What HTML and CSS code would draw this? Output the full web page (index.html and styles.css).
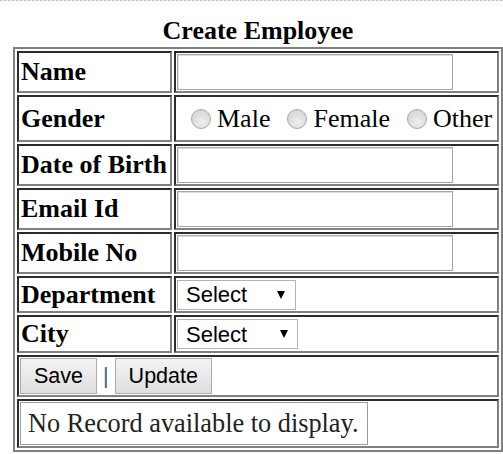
FILE: index.html
```html
<!DOCTYPE html>
<html lang="en">
<head>
<meta charset="utf-8">
<title>Create Employee</title>
<link rel="stylesheet" href="styles.css">
</head>
<body>
<div class="topline"></div>
<table class="emp">
  <caption>Create Employee</caption>
  <tr>
    <td class="label">Name</td>
    <td class="val"><input type="text" class="txt"></td>
  </tr>
  <tr>
    <td class="label">Gender</td>
    <td class="val">
      <div class="radios">
        <label class="opt"><input type="radio" name="gender" class="rad">Male</label>
        <label class="opt"><input type="radio" name="gender" class="rad">Female</label>
        <label class="opt"><input type="radio" name="gender" class="rad">Other</label>
      </div>
    </td>
  </tr>
  <tr>
    <td class="label">Date of Birth</td>
    <td class="val"><input type="text" class="txt"></td>
  </tr>
  <tr>
    <td class="label">Email Id</td>
    <td class="val"><input type="text" class="txt"></td>
  </tr>
  <tr>
    <td class="label">Mobile No</td>
    <td class="val"><input type="text" class="txt"></td>
  </tr>
  <tr>
    <td class="label">Department</td>
    <td class="val">
      <div class="selrow">
        <span class="sel sel-dept"><select><option>Select</option></select></span>
      </div>
    </td>
  </tr>
  <tr>
    <td class="label">City</td>
    <td class="val">
      <div class="selrow selrow-tall">
        <span class="sel sel-city"><select><option>Select</option></select></span>
      </div>
    </td>
  </tr>
  <tr>
    <td colspan="2" class="wide">
      <div class="actions">
        <button type="button" class="btn">Save</button>
        <span class="sep">|</span>
        <button type="button" class="btn">Update</button>
      </div>
    </td>
  </tr>
  <tr>
    <td colspan="2" class="wide">
      <div class="record">No Record available to display.</div>
    </td>
  </tr>
</table>
</body>
</html>
```

FILE: styles.css
```css
html, body {
  margin: 0;
  padding: 0;
  background: #ffffff;
}

body {
  font-family: "Liberation Serif", "Times New Roman", serif;
  color: #000;
}

.topline {
  height: 1px;
  background: repeating-linear-gradient(90deg, #c4c4c4 0, #c4c4c4 2px, #e6e6e6 2px, #e6e6e6 4px);
}

.emp {
  margin: 15px 0 0 13px;
  width: 490px;
  table-layout: fixed;
  border-collapse: separate;
  border-spacing: 2px;
  border: 2px solid #808080;
}

.emp caption {
  font-weight: bold;
  font-size: 26px;
  line-height: 30px;
  padding-bottom: 1px;
  text-align: center;
  white-space: nowrap;
}

.emp td {
  border: 2px solid;
  border-color: #2b2b2b #808080 #808080 #2b2b2b;
  padding: 1px;
  vertical-align: middle;
}

.emp td.label {
  box-sizing: border-box;
  width: 155px;
  padding-left: 2px;
  font-weight: bold;
  font-size: 26px;
  line-height: 30px;
  white-space: nowrap;
}

.txt {
  display: block;
  box-sizing: border-box;
  width: 276px;
  height: 36px;
  margin: 0;
  border: 1px solid #a6a6a6;
  box-shadow: inset 1px 1px 0 #dedede;
  background: #fff;
  padding: 0 4px;
  font-family: "Liberation Sans", Arial, sans-serif;
  font-size: 20px;
}

.radios {
  display: flex;
  align-items: center;
  height: 41px;
  white-space: nowrap;
  font-size: 26px;
  line-height: 30px;
}

.opt {
  display: flex;
  align-items: center;
  margin-left: 17px;
}

.opt:first-child {
  margin-left: 14px;
}

.rad {
  appearance: none;
  -webkit-appearance: none;
  box-sizing: border-box;
  width: 20px;
  height: 20px;
  margin: 0 6px 0 0;
  border: 1px solid #a8a8a8;
  border-radius: 50%;
  background: radial-gradient(circle at 55% 65%, #efefef 0, #dcdcdc 55%, #d0d0d0 100%);
}

.selrow {
  display: flex;
  align-items: center;
  height: 31px;
}

.selrow-tall {
  height: 32px;
}

.sel {
  position: relative;
  display: block;
}

.sel select {
  appearance: none;
  -webkit-appearance: none;
  display: block;
  box-sizing: border-box;
  height: 30px;
  margin: 0;
  padding: 0 0 0 8px;
  border: 1px solid #b3b3b3;
  border-radius: 0;
  background: #fff;
  color: #000;
  font-family: "Liberation Sans", Arial, sans-serif;
  font-size: 22px;
}

.sel-dept select {
  width: 119px;
}

.sel-city select {
  width: 121px;
}

.sel::after {
  content: "";
  position: absolute;
  right: 11px;
  top: 11px;
  border-left: 4.5px solid transparent;
  border-right: 4.5px solid transparent;
  border-top: 8px solid #000;
}

.sel-city::after {
  right: 10px;
}

.actions {
  display: flex;
  align-items: center;
  height: 36px;
  font-family: "Liberation Sans", Arial, sans-serif;
  font-size: 21.5px;
}

.btn {
  box-sizing: border-box;
  height: 36px;
  margin: 0;
  padding: 0 13px;
  border: 1px solid #acacac;
  border-radius: 0;
  background: linear-gradient(#f4f4f4, #dedede);
  color: #000;
  font-family: "Liberation Sans", Arial, sans-serif;
  font-size: 21.5px;
}

.sep {
  margin: 0 6px;
  color: #3f5f80;
  line-height: 24px;
}

.record {
  display: inline-block;
  box-sizing: border-box;
  height: 43px;
  padding: 5px 8px 5px 7px;
  border: 1px solid #9c9c9c;
  font-size: 26.3px;
  line-height: 31px;
  color: #222;
  white-space: nowrap;
}
```
